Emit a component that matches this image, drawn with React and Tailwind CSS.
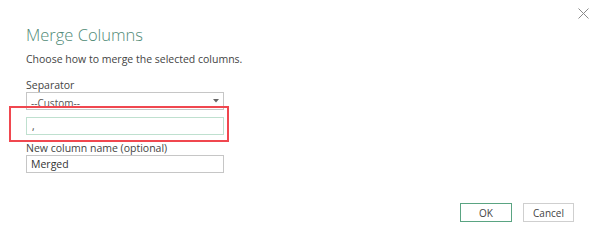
import React from "react";

export default function App() {
  return (
    <div className="relative w-[600px] h-[247px] bg-white overflow-hidden font-['Open_Sans',sans-serif] text-[#444]">
      <button className="absolute right-[9px] top-[5px] text-[#888] w-[16px] h-[16px] flex items-center justify-center">
        <svg width="11" height="11" viewBox="0 0 11 11" fill="none" stroke="#8a8a8a" strokeWidth="1">
          <path d="M0.5 0.5 L10.5 10.5 M10.5 0.5 L0.5 10.5" />
        </svg>
      </button>

      <div className="pl-[26px] pt-[24px] flex flex-col">
        <h1 className="text-[16.5px] leading-[22px] font-light text-[#4f8a76]">Merge Columns</h1>
        <p className="mt-[6px] text-[10.5px] leading-[14px] text-[#444]">Choose how to merge the selected columns.</p>

        <label className="mt-[12px] text-[10.5px] leading-[14px] text-[#444]">Separator</label>
        <div className="w-[198px] h-[18px] border border-[#c6c6c6] flex items-end justify-between pl-[4px] pr-[4px]">
          <span className="text-[10px] leading-[12px] text-[#555]">--Custom--</span>
          <svg width="6" height="4" viewBox="0 0 6 4" className="mb-[6px]">
            <path d="M0 0 L6 0 L3 3.5 Z" fill="#666" />
          </svg>
        </div>

        <div className="mt-[7px] w-[198px] h-[18px] border border-[#bfe0cf] flex items-center pl-[5px]">
          <span className="text-[10px] leading-[12px] text-[#444]">,</span>
        </div>

        <label className="mt-[6px] text-[10.5px] leading-[14px] text-[#444]">New column name (optional)</label>
        <div className="w-[198px] h-[18px] border border-[#c6c6c6] flex items-center pl-[4px]">
          <span className="text-[10.5px] leading-[13px] text-[#333]">Merged</span>
        </div>
      </div>

      <div className="absolute left-[9px] top-[106px] w-[220px] h-[36px] border-[2.5px] border-[#f0474f] bg-transparent" />

      <div className="absolute right-[26px] top-[203px] flex gap-[11px]">
        <button className="w-[52px] h-[19px] border border-[#5aa482] text-[10px] leading-[12px] text-[#444] flex items-center justify-center">OK</button>
        <button className="w-[51px] h-[19px] border border-[#cfcfcf] text-[10px] leading-[12px] text-[#444] flex items-center justify-center">Cancel</button>
      </div>
    </div>
  );
}
